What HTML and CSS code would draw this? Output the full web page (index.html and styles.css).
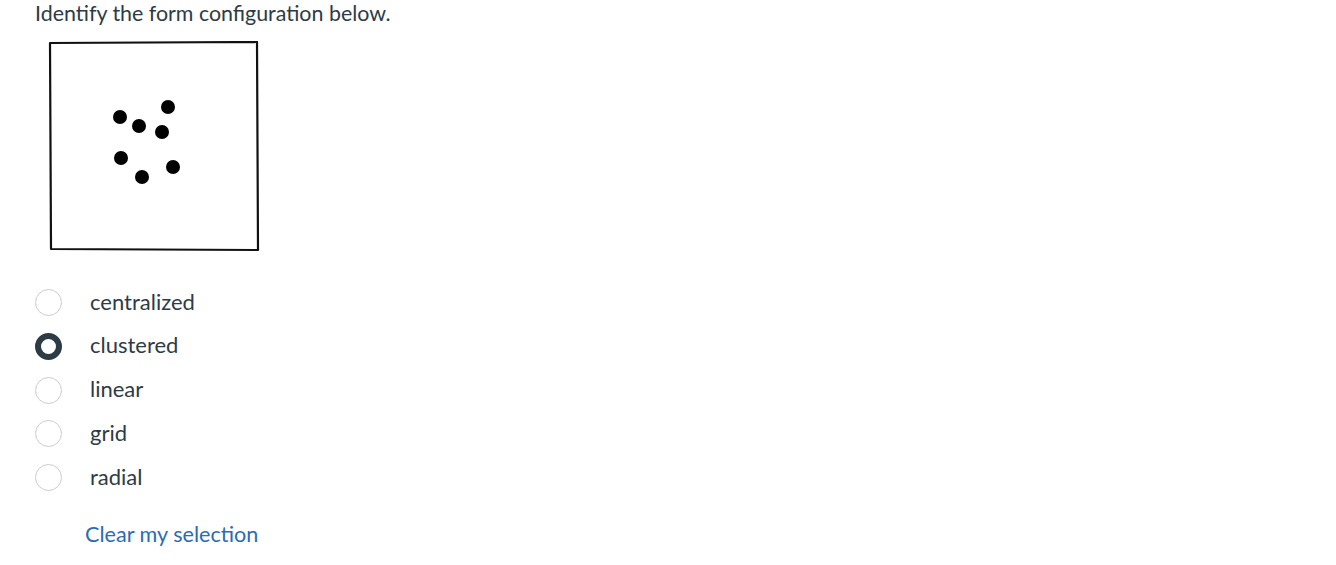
FILE: index.html
```html
<!DOCTYPE html>
<html lang="en">
<head>
  <meta charset="UTF-8">
  <title>Question</title>
  <link rel="stylesheet" href="styles.css">
</head>
<body>
  <div class="question">
    <p class="question-text">Identify the form configuration below.</p>
    <div class="figure">
      <svg width="214" height="214" viewBox="0 0 214 214">
        <path d="M2 2 L209 1 M209 1 L210 209 M210 209 L3 208 M3 208 L2 2" stroke="#111" stroke-width="2.2" fill="none" stroke-linecap="round"/>
        <circle cx="72" cy="76" r="7"/>
        <circle cx="120" cy="66" r="7"/>
        <circle cx="91" cy="85" r="7"/>
        <circle cx="114" cy="91" r="7"/>
        <circle cx="73" cy="117" r="7"/>
        <circle cx="125" cy="126" r="7"/>
        <circle cx="94" cy="136" r="7"/>
      </svg>
    </div>
    <ul class="answers">
      <li><span class="radio"></span><span class="label">centralized</span></li>
      <li><span class="radio checked"></span><span class="label">clustered</span></li>
      <li><span class="radio"></span><span class="label">linear</span></li>
      <li><span class="radio"></span><span class="label">grid</span></li>
      <li><span class="radio"></span><span class="label">radial</span></li>
    </ul>
    <a class="clear" href="#">Clear my selection</a>
  </div>
</body>
</html>
```

FILE: styles.css
```css
*,
*::before,
*::after{
  box-sizing: border-box;
}
body{
  margin: 0;
  background: #fff;
  color: #2d3b45;
  font-family: Lato, "Noto Sans", sans-serif;
}
.question{
  padding: 0 0 0 35px;
}
.question-text{
  margin: 0;
  font-size: 21.4px;
  line-height: 26px;
}
.figure{
  margin: 15px 0 0 13px;
  line-height: 0;
}
.figure svg circle{
  fill: #000;
}
.answers{
  list-style: none;
  margin: 34px 0 0 0;
  padding: 0;
  display: flex;
  flex-direction: column;
  gap: 16.75px;
}
.answers li{
  display: flex;
  align-items: center;
  height: 27px;
}
.radio{
  width: 27px;
  height: 27px;
  border-radius: 50%;
  border: 1px solid #c7cdd1;
  background: #fff;
  flex-shrink: 0;
}
.radio.checked{
  border: 6px solid #2d3b45;
}
.label{
  margin-left: 28px;
  font-size: 22px;
  line-height: 26px;
  margin-top: -2px;
}
.clear{
  display: inline-block;
  margin: 30px 0 0 50px;
  font-size: 21.6px;
  color: #2d6bb3;
  text-decoration: none;
}
```
